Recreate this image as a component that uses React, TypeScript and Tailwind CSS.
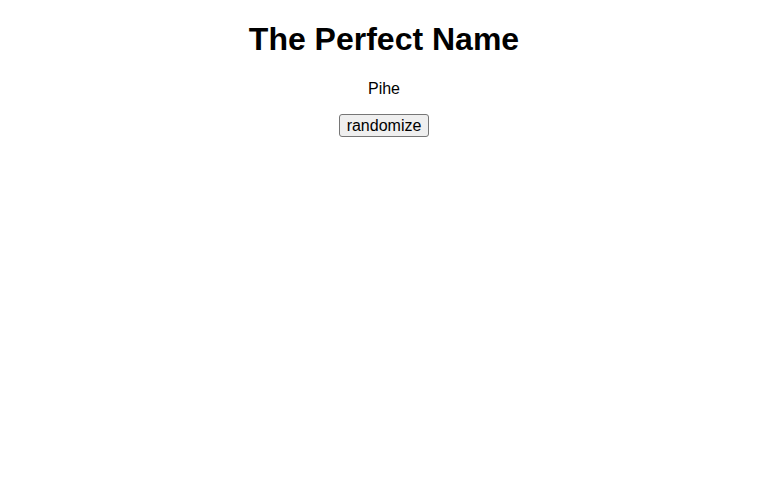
import { useState } from 'react';

const names = ['Pihe', 'Luma', 'Tavo', 'Kiri', 'Nesa', 'Orin', 'Zeli', 'Mavu'];

export default function App() {
    const [name, setName] = useState('Pihe');

    const randomize = () => {
        setName(names[Math.floor(Math.random() * names.length)]);
    };

    return (
        <div className="m-2 text-center text-black font-['Liberation_Sans',Arial,sans-serif]">
            <h1 className="my-[21.44px] text-[32px] font-bold leading-[37px]">The Perfect Name</h1>
            <p className="my-4 text-base leading-[18px]">{name}</p>
            <button
                onClick={randomize}
                className="rounded-[3px] border border-[#767676] bg-[#efefef] px-[7px] py-[1px] text-base leading-[19px] text-black hover:bg-[#e5e5e5]"
            >
                randomize
            </button>
        </div>
    );
}
